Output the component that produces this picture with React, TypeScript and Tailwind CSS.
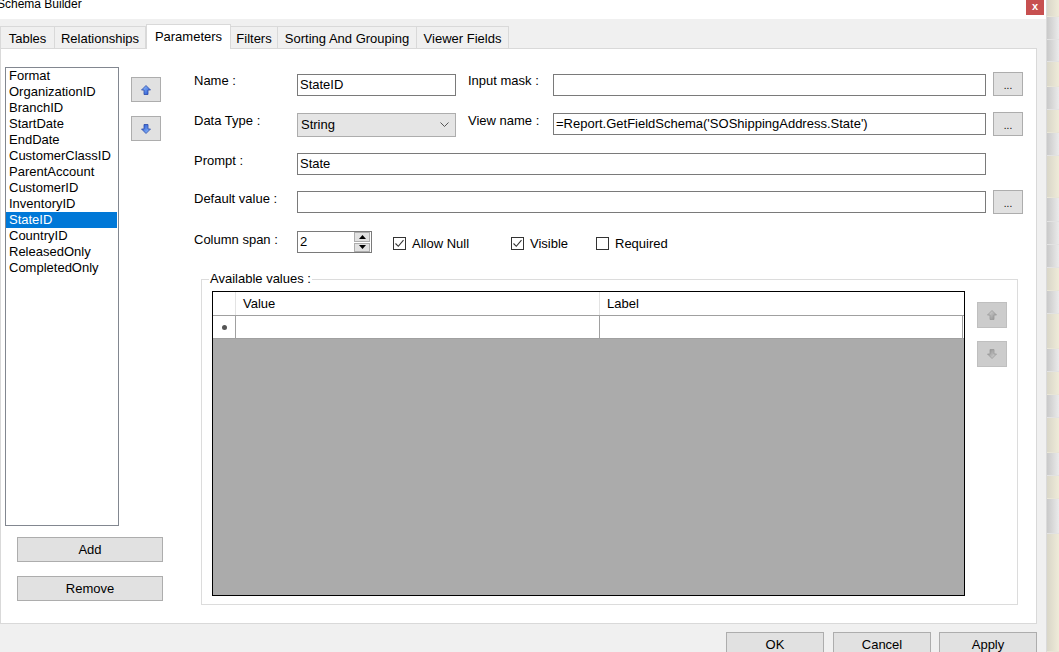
import React from "react";

const PARAMS = [
  "Format",
  "OrganizationID",
  "BranchID",
  "StartDate",
  "EndDate",
  "CustomerClassID",
  "ParentAccount",
  "CustomerID",
  "InventoryID",
  "StateID",
  "CountryID",
  "ReleasedOnly",
  "CompletedOnly",
];

const TABS = [
  { label: "Tables", w: "w-[55px]" },
  { label: "Relationships", w: "w-[91px]" },
  { label: "Parameters", w: "w-[85px]", active: true },
  { label: "Filters", w: "w-[47px]" },
  { label: "Sorting And Grouping", w: "w-[139px]" },
  { label: "Viewer Fields", w: "w-[92px]" },
];

// stripes of the window behind the dialog
const STRIPES: [number, boolean][] = [
  [17, true], [23, false], [22, false], [25, true], [23, false], [23, true],
  [23, false], [42, true], [24, false], [23, false], [23, false], [23, true],
  [23, false], [35, true], [23, false], [23, true], [23, false], [35, true],
  [23, false], [23, true], [35, false], [118, true],
];

function Arrow({ down, disabled }: { down?: boolean; disabled?: boolean }) {
  const id = `g-${down ? "d" : "u"}-${disabled ? "x" : "o"}`;
  return (
    <svg width="10" height="10" viewBox="0 0 10 10" className={down ? "rotate-180" : ""}>
      <defs>
        <linearGradient id={id} x1="0" y1="0" x2="1" y2="1">
          <stop offset="0" stopColor={disabled ? "#d8d8d8" : "#9cc8ff"} />
          <stop offset="1" stopColor={disabled ? "#8c8c8c" : "#1f4fd0"} />
        </linearGradient>
      </defs>
      <polygon
        points="5,0.5 9.5,5 7,5 7,9.5 3,9.5 3,5 0.5,5"
        fill={`url(#${id})`}
        stroke={disabled ? "#999" : "#2b4aa8"}
        strokeWidth="0.8"
      />
    </svg>
  );
}

function MoveButtons({ disabled }: { disabled?: boolean }) {
  const cls = disabled
    ? "w-[30px] h-[26px] bg-[#cccccc] border border-[#bfbfbf] flex items-center justify-center"
    : "w-[30px] h-[25px] bg-[#e1e1e1] border border-[#adadad] flex items-center justify-center";
  return (
    <div className="flex flex-col gap-[13px]">
      <div className={cls}>
        <Arrow disabled={disabled} />
      </div>
      <div className={cls}>
        <Arrow down disabled={disabled} />
      </div>
    </div>
  );
}

function TextBox({ w, value }: { w: string; value?: string }) {
  return (
    <div className={`${w} h-[22px] border border-[#7a7a7a] bg-white flex items-center pl-[2px] whitespace-nowrap overflow-hidden`}>
      {value}
    </div>
  );
}

function DotsButton() {
  return (
    <div className="ml-[7px] w-[30px] h-[24px] bg-[#e1e1e1] border border-[#adadad] flex items-end justify-center pb-[4px] text-[10px] leading-none">
      ...
    </div>
  );
}

function Label({ w, children }: { w: string; children: React.ReactNode }) {
  return <div className={`${w} self-start pt-[1px] leading-[16px]`}>{children}</div>;
}

function CheckBox({ checked, label, w }: { checked?: boolean; label: string; w?: string }) {
  return (
    <div className={`${w ?? ""} flex items-center gap-[6px]`}>
      <div className="w-[13px] h-[13px] border border-[#333] bg-white flex items-center justify-center">
        {checked && (
          <svg width="11" height="11" viewBox="0 0 11 11">
            <path d="M1.5 5.5 L4.3 8.3 L9.5 2.2" fill="none" stroke="#333" strokeWidth="1.1" />
          </svg>
        )}
      </div>
      <span>{label}</span>
    </div>
  );
}

export default function App() {
  return (
    <div className="w-[1059px] h-[652px] flex overflow-hidden bg-white text-[13px] text-black font-['Liberation_Sans',Arial,sans-serif]">
      {/* dialog window */}
      <div className="w-[1047px] h-full flex flex-col bg-[#f0f0f0] border-r border-[#dadada]">
        {/* title bar */}
        <div className="h-[19px] bg-white flex justify-between shrink-0">
          <div className="-ml-[3px] -mt-[3px] text-[12px] leading-[14px]">Schema Builder</div>
          <div className="mr-[2px] w-[18px] h-[15px] bg-[#c75050] flex items-center justify-center text-white text-[11px] font-bold leading-none pb-[2px]">
            x
          </div>
        </div>

        {/* tabs */}
        <div className="h-[29px] flex items-end shrink-0">
          {TABS.map((t) =>
            t.active ? (
              <div
                key={t.label}
                className={`${t.w} h-[25px] -mb-px relative z-10 bg-white border border-b-0 border-[#d9d9d9] flex justify-center pt-[4px] leading-[16px]`}
              >
                {t.label}
              </div>
            ) : (
              <div
                key={t.label}
                className={`${t.w} h-[22px] bg-[#f0f0f0] border border-b-0 border-l-0 first:border-l border-[#d9d9d9] flex justify-center pt-[4px] leading-[16px]`}
              >
                {t.label}
              </div>
            )
          )}
        </div>

        {/* tab page */}
        <div className="w-[1037px] h-[576px] shrink-0 bg-white border border-[#d9d9d9] flex">
          {/* parameter list column */}
          <div className="w-[162px] flex flex-col">
            <div className="flex">
              <div className="ml-[4px] mt-[18px] w-[114px] h-[459px] border border-[#828790] bg-white flex flex-col">
                {PARAMS.map((p) => (
                  <div
                    key={p}
                    className={`h-[16px] leading-[16px] pl-[3px] mr-px whitespace-nowrap ${
                      p === "StateID" ? "bg-[#0078d7] text-white" : ""
                    }`}
                  >
                    {p}
                  </div>
                ))}
              </div>
              <div className="ml-[12px] mt-[28px]">
                <div className="flex flex-col gap-[14px]">
                  <div className="w-[30px] h-[25px] bg-[#e1e1e1] border border-[#adadad] flex items-center justify-center">
                    <Arrow />
                  </div>
                  <div className="w-[30px] h-[25px] bg-[#e1e1e1] border border-[#adadad] flex items-center justify-center">
                    <Arrow down />
                  </div>
                </div>
              </div>
            </div>
            <div className="ml-[16px] mt-[11px] w-[146px] h-[25px] bg-[#e1e1e1] border border-[#adadad] flex items-center justify-center">
              Add
            </div>
            <div className="ml-[16px] mt-[14px] w-[146px] h-[25px] bg-[#e1e1e1] border border-[#adadad] flex items-center justify-center">
              Remove
            </div>
          </div>

          {/* form column */}
          <div className="ml-[31px] w-[829px] flex flex-col">
            <div className="mt-[23px] h-[24px] flex items-end">
              <Label w="w-[103px]">Name :</Label>
              <TextBox w="w-[159px]" value="StateID" />
              <div className="ml-[12px]" />
              <Label w="w-[85px]">Input mask :</Label>
              <TextBox w="w-[433px]" />
              <DotsButton />
            </div>

            <div className="mt-[16px] h-[24px] flex items-start">
              <Label w="w-[103px]">Data Type :</Label>
              <div className="mt-px w-[159px] h-[24px] bg-[#e5e5e5] border border-[#adadad] flex items-center justify-between pl-[3px] pr-[6px]">
                <span>String</span>
                <svg width="9" height="6" viewBox="0 0 9 6">
                  <path d="M0.5 0.5 L4.5 4.5 L8.5 0.5" fill="none" stroke="#555" strokeWidth="1" />
                </svg>
              </div>
              <div className="ml-[12px]" />
              <Label w="w-[85px]">View name :</Label>
              <div className="mt-px">
                <TextBox w="w-[433px]" value="=Report.GetFieldSchema('SOShippingAddress.State')" />
              </div>
              <DotsButton />
            </div>

            <div className="mt-[16px] h-[24px] flex items-center">
              <Label w="w-[103px]">Prompt :</Label>
              <TextBox w="w-[689px]" value="State" />
            </div>

            <div className="mt-[14px] h-[24px] flex items-center">
              <Label w="w-[103px]">Default value :</Label>
              <TextBox w="w-[689px]" />
              <DotsButton />
            </div>

            <div className="mt-[17px] h-[22px] flex items-center">
              <Label w="w-[103px]">Column span :</Label>
              <div className="w-[75px] h-[22px] border border-[#7a7a7a] bg-white flex items-center justify-between pl-[2px] pr-px">
                <span>2</span>
                <div className="w-[16px] h-[20px] flex flex-col gap-px">
                  <div className="flex-1 bg-[#e1e1e1] border border-[#adadad] flex items-center justify-center">
                    <svg width="7" height="4" viewBox="0 0 7 4">
                      <polygon points="3.5,0 7,4 0,4" fill="#000" />
                    </svg>
                  </div>
                  <div className="flex-1 bg-[#e1e1e1] border border-[#adadad] flex items-center justify-center">
                    <svg width="7" height="4" viewBox="0 0 7 4">
                      <polygon points="0,0 7,0 3.5,4" fill="#000" />
                    </svg>
                  </div>
                </div>
              </div>
              <div className="ml-[21px] mt-[3px] flex items-center">
                <CheckBox checked label="Allow Null" w="w-[118px]" />
                <CheckBox checked label="Visible" w="w-[85px]" />
                <CheckBox label="Required" />
              </div>
            </div>

            {/* available values group */}
            <fieldset className="ml-[7px] mt-[18px] w-[817px] h-[334px] border border-[#dcdcdc]">
              <legend className="ml-[7px] px-px leading-[16px]">Available values :</legend>
              <div className="flex pl-[10px] mt-[4px]">
                <div className="w-[753px] h-[305px] border border-black bg-[#ababab] flex flex-col">
                  <div className="h-[24px] bg-white flex border-b border-[#a0a0a0]">
                    <div className="w-[23px] border-r border-[#e3e3e3]" />
                    <div className="w-[364px] border-r border-[#e3e3e3] pl-[7px] flex items-center">Value</div>
                    <div className="flex-1 pl-[7px] flex items-center">Label</div>
                  </div>
                  <div className="h-[23px] bg-white flex border-b border-[#a0a0a0]">
                    <div className="w-[23px] border-r border-[#a0a0a0] flex items-center justify-center">
                      <div className="w-[5px] h-[5px] rounded-full bg-[#555]" />
                    </div>
                    <div className="w-[364px] border-r border-[#a0a0a0]" />
                    <div className="flex-1 border-r border-[#a0a0a0] mr-px" />
                  </div>
                </div>
                <div className="ml-[12px] mt-[11px]">
                  <MoveButtons disabled />
                </div>
              </div>
            </fieldset>
          </div>
        </div>

        {/* dialog buttons */}
        <div className="mt-[8px] flex justify-end pr-[9px]">
          <div className="w-[98px] h-[26px] bg-[#e1e1e1] border border-[#adadad] flex justify-center pt-[4px] leading-[16px]">OK</div>
          <div className="ml-[9px] w-[98px] h-[26px] bg-[#e1e1e1] border border-[#adadad] flex justify-center pt-[4px] leading-[16px]">Cancel</div>
          <div className="ml-[8px] w-[98px] h-[26px] bg-[#e1e1e1] border border-[#adadad] flex justify-center pt-[4px] leading-[16px]">Apply</div>
        </div>
      </div>

      {/* window behind */}
      <div className="flex-1 flex flex-col">
        {STRIPES.map(([h, beige], i) => (
          <div
            key={i}
            style={{ height: h }}
            className={
              beige
                ? "shrink-0 bg-gradient-to-r from-[#d9d6c8] to-[#efebd9] border-b border-[#e8e5d6]"
                : "shrink-0 bg-gradient-to-r from-[#c9c9c9] to-[#ebebeb] border-b border-[#e2e2e2]"
            }
          />
        ))}
      </div>
    </div>
  );
}
